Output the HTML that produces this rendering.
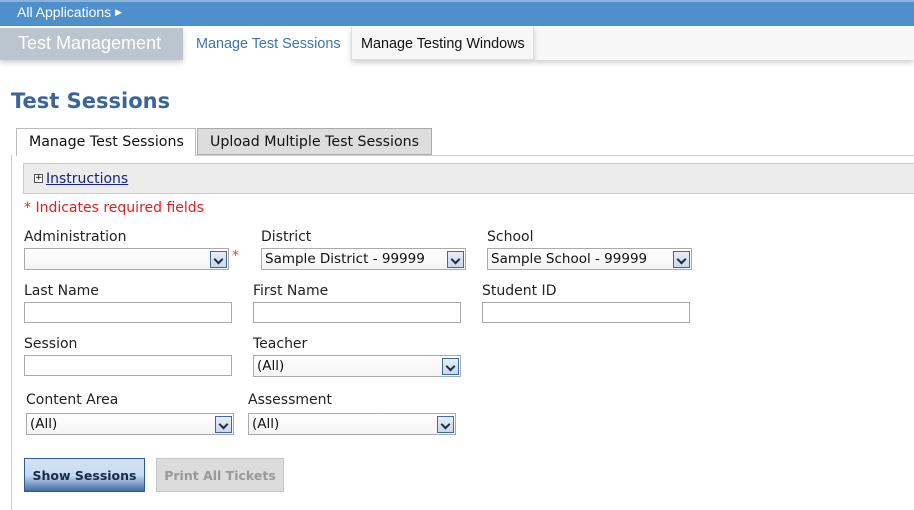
<!DOCTYPE html>
<html><head><meta charset="utf-8"><style>
*{margin:0;padding:0;box-sizing:border-box}
body{width:914px;height:510px;overflow:hidden;background:#fff;position:relative;font-family:"DejaVu Sans",Verdana,sans-serif;}
.a{position:absolute}
.lbl{position:absolute;font-size:14px;color:#222;white-space:nowrap}
.inp{position:absolute;height:21px;border:1px solid #a9a9a9;background:#fff}
.sel{position:absolute;height:22px;border:1px solid #aaa;background:linear-gradient(#fff,#f4f4f4);font-size:13.5px;color:#111;padding:2px 0 0 3px;white-space:nowrap}
.sel i{position:absolute;right:1px;top:2px;width:17px;height:17px;border:1px solid #3d6a9c;background:linear-gradient(#e6eef7,#c9d8ea)}
.sel i:after{content:"";position:absolute;left:4px;top:4px;width:5px;height:5px;border-right:2px solid #1a2e4a;border-bottom:2px solid #1a2e4a;transform:rotate(45deg)}
</style></head><body>
<div class="a" style="left:0;top:0;width:914px;height:26px;background:#4f8fcc;border-top:2px solid #8ab4dc"></div>
<div class="a" style="left:17px;top:4px;font-family:'Liberation Sans',Arial,sans-serif;font-size:14px;color:#fff">All Applications <span style="font-size:9px;position:relative;top:-2px">&#9654;</span></div>
<div class="a" style="left:534px;top:27px;width:380px;height:33px;background:#f7f7f7;box-shadow:0 3px 5px rgba(0,0,0,.18)"></div>
<div class="a" style="left:0;top:28px;width:183px;height:32px;background:#bac5cf;box-shadow:0 3px 5px rgba(0,0,0,.18)"></div>
<div class="a" style="left:18px;top:33px;font-family:'Liberation Sans',Arial,sans-serif;font-size:18px;color:#fff">Test Management</div>
<div class="a" style="left:196px;top:36px;font-family:'Liberation Sans',Arial,sans-serif;font-size:14.4px;color:#3d74b0">Manage Test Sessions</div>
<div class="a" style="left:351px;top:27px;width:183px;height:33px;background:#f7f7f7;border:1px solid #ddd;border-top:none;box-shadow:0 3px 5px rgba(0,0,0,.18)"></div>
<div class="a" style="left:361px;top:36px;font-family:'Liberation Sans',Arial,sans-serif;font-size:14.4px;color:#111">Manage Testing Windows</div>
<div class="a" style="left:11px;top:89px;font-size:21px;font-weight:bold;color:#3a6597">Test Sessions</div>
<div class="a" style="left:16px;top:128px;width:180px;height:28px;background:#fff;border:1px solid #bbb;border-bottom:none"></div>
<div class="a" style="left:29px;top:134px;font-size:14.2px;color:#111">Manage Test Sessions</div>
<div class="a" style="left:197px;top:128px;width:235px;height:27px;background:#ddd;border:1px solid #aaa"></div>
<div class="a" style="left:210px;top:134px;font-size:14.2px;color:#111">Upload Multiple Test Sessions</div>
<div class="a" style="left:196px;top:155px;width:718px;height:1px;background:#ccc"></div>
<div class="a" style="left:11px;top:155px;width:1px;height:355px;background:#ccc"></div>
<div class="a" style="left:23px;top:163px;width:891px;height:31px;background:#ececec;border:1px solid #ccc;border-right:none"></div>
<div class="a" style="left:34px;top:174px;width:9px;height:9px;border:1px solid #555;background:#fff;font-size:9px;line-height:7px;text-align:center;color:#000">+</div>
<div class="a" style="left:46px;top:171px;font-size:14px;color:#1a237e;text-decoration:underline">Instructions</div>
<div class="a" style="left:24px;top:200px;font-size:14px;color:#e02020">* Indicates required fields</div>
<div class="lbl" style="left:24px;top:229px">Administration</div>
<div class="sel" style="left:24px;top:248px;width:205px"><i></i></div>
<div class="a" style="left:232px;top:248px;color:#f04040;font-size:14px">*</div>
<div class="lbl" style="left:261px;top:229px">District</div>
<div class="sel" style="left:261px;top:248px;width:205px">Sample District - 99999<i></i></div>
<div class="lbl" style="left:487px;top:229px">School</div>
<div class="sel" style="left:487px;top:248px;width:205px">Sample School - 99999<i></i></div>
<div class="lbl" style="left:24px;top:283px">Last Name</div>
<div class="inp" style="left:24px;top:302px;width:208px"></div>
<div class="lbl" style="left:253px;top:283px">First Name</div>
<div class="inp" style="left:253px;top:302px;width:208px"></div>
<div class="lbl" style="left:482px;top:283px">Student ID</div>
<div class="inp" style="left:482px;top:302px;width:208px"></div>
<div class="lbl" style="left:24px;top:336px">Session</div>
<div class="inp" style="left:24px;top:355px;width:208px"></div>
<div class="lbl" style="left:253px;top:336px">Teacher</div>
<div class="sel" style="left:253px;top:355px;width:208px">(All)<i></i></div>
<div class="lbl" style="left:26px;top:392px">Content Area</div>
<div class="sel" style="left:26px;top:413px;width:208px">(All)<i></i></div>
<div class="lbl" style="left:248px;top:392px">Assessment</div>
<div class="sel" style="left:248px;top:413px;width:208px">(All)<i></i></div>
<div class="a" style="left:24px;top:458px;width:121px;height:34px;border:1px solid #2d5c94;background:linear-gradient(#d3e3f5 0%,#c8dbf0 50%,#3f6ea6 100%);font-size:12.5px;font-weight:bold;color:#1a2a44;text-align:center;line-height:33px">Show Sessions</div>
<div class="a" style="left:156px;top:458px;width:128px;height:34px;border:1px solid #c4c4c4;background:#dcdcdc;font-size:12.5px;font-weight:bold;color:#999;text-align:center;line-height:33px">Print All Tickets</div>
</body></html>
